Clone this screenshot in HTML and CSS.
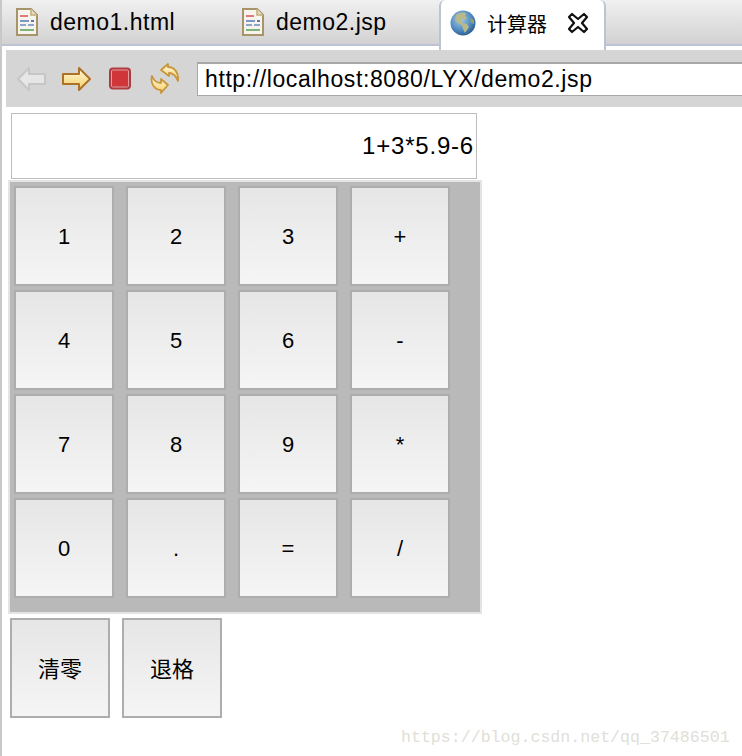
FILE: index.html
```html
<!DOCTYPE html>
<html>
  <head>
    <title>计算器</title>
    <link rel="stylesheet" href="styles.css">
  </head>
  <body>
    <svg class="defs" width="0" height="0">
      <defs>
        <linearGradient id="arrow-fill" x1="0" y1="0" x2="0" y2="1">
          <stop offset="0" stop-color="#fffbe0"/>
          <stop offset="1" stop-color="#f6cc62"/>
        </linearGradient>
        <radialGradient id="globe-fill" cx="0.4" cy="0.35" r="0.75">
          <stop offset="0" stop-color="#a5cdea"/>
          <stop offset="0.6" stop-color="#4f88bd"/>
          <stop offset="1" stop-color="#1f4f82"/>
        </radialGradient>
        <symbol id="doc" viewBox="0 0 22 28">
          <path d="M1 1H15L21 7V27H1Z" fill="#f6f4ec" stroke="#a8946a" stroke-width="2"/>
          <path d="M15 1V7H21" fill="#e9dcb8" stroke="#c2ad7c" stroke-width="1.5"/>
          <rect x="4" y="7" width="8" height="2" fill="#e0787c"/>
          <rect x="4" y="12" width="9" height="2" fill="#7f97c2"/>
          <rect x="15" y="12" width="3" height="2" fill="#5b78ac"/>
          <rect x="4" y="16" width="6" height="2" fill="#8fa5cb"/>
          <rect x="12" y="16" width="6" height="2" fill="#8fa5cb"/>
          <rect x="4" y="21" width="14" height="2" fill="#7cb47c"/>
        </symbol>
      </defs>
    </svg>

    <div class="tabs">
      <div class="tab tab-one">
        <svg class="doc-icon"><use href="#doc"/></svg>
        <span>demo1.html</span>
      </div>
      <div class="tab tab-two">
        <svg class="doc-icon"><use href="#doc"/></svg>
        <span>demo2.jsp</span>
      </div>
      <div class="tab tab-active">
        <svg class="globe-icon" viewBox="0 0 26 26">
          <circle cx="13" cy="13" r="12.5" fill="url(#globe-fill)"/>
          <path d="M6 5C9 2 14 2 16 3L15 6L17 8L14 10L12 9L11 11L13 13L17 14L19 17L17 20L15 23L13 19L12 15L8 13L5 10Z" fill="#b7b98a"/>
          <path d="M20 8L24 10L24 14L21 13Z" fill="#8f9f78"/>
        </svg>
        <span class="tab-title">计算器</span>
        <svg class="close-icon" viewBox="0 0 22 22">
          <path d="M2 5L5 2L11 7L17 2L20 5L15 11L20 17L17 20L11 15L5 20L2 17L7 11Z" fill="#fff" stroke="#111" stroke-width="2.2" stroke-linejoin="round"/>
        </svg>
      </div>
    </div>

    <div class="toolbar">
      <svg class="nav-icon" viewBox="0 0 29 24">
        <path d="M12 1L1 12L12 23V17H28V7H12Z" fill="#e6e6e6" stroke="#c6c6c6" stroke-width="2" stroke-linejoin="round"/>
      </svg>
      <svg class="nav-icon" viewBox="0 0 29 24">
        <path d="M17 1L28 12L17 23V17H1V7H17Z" fill="url(#arrow-fill)" stroke="#ab7228" stroke-width="2" stroke-linejoin="round"/>
      </svg>
      <svg class="stop-icon" viewBox="0 0 22 22">
        <rect x="1" y="1" width="20" height="20" rx="3" fill="#e0a0a2" stroke="#b03a3e" stroke-width="2"/>
        <rect x="3" y="3" width="16" height="16" fill="#cf3539"/>
      </svg>
      <svg class="refresh-icon" viewBox="0 0 29 31">
        <path d="M11 7L18 1V4C24 4 29 9 28 18C26 13 23 10 19 10V13Z" fill="url(#arrow-fill)" stroke="#c8963c" stroke-width="1.8" stroke-linejoin="round"/>
        <path d="M18 22L11 30V27C5 27 0 21 2 13C4 18 7 20 11 20V16Z" fill="url(#arrow-fill)" stroke="#c8963c" stroke-width="1.8" stroke-linejoin="round"/>
      </svg>
      <div class="url">http://localhost:8080/LYX/demo2.jsp</div>
    </div>

    <div class="display">1+3*5.9-6</div>

    <div class="keypad">
      <button class="key">1</button>
      <button class="key">2</button>
      <button class="key">3</button>
      <button class="key">+</button>
      <button class="key">4</button>
      <button class="key">5</button>
      <button class="key">6</button>
      <button class="key">-</button>
      <button class="key">7</button>
      <button class="key">8</button>
      <button class="key">9</button>
      <button class="key">*</button>
      <button class="key">0</button>
      <button class="key">.</button>
      <button class="key">=</button>
      <button class="key">/</button>
    </div>

    <div class="actions">
      <button class="key">清零</button>
      <button class="key">退格</button>
    </div>

    <div class="watermark">https://blog.csdn.net/qq_37486501</div>
  </body>
</html>
```

FILE: styles.css
```css
* {
  box-sizing: border-box;
}
html,
body {
  height: 100%;
}
body {
  margin: 0;
  border-left: 2px solid #c8c8c4;
  background-color: #fff;
  color: #000;
  font-family: "Liberation Sans", "Noto Sans CJK SC", sans-serif;
  overflow: hidden;
  position: relative;
}
.defs {
  position: absolute;
}
.tabs {
  display: flex;
  height: 46px;
  border-bottom: 2px solid #bcc3d2;
  background: linear-gradient(#f0f0f0, #d2d2d2);
  font-size: 23px;
  letter-spacing: 0.5px;
}
.tab {
  display: flex;
  align-items: center;
  height: 44px;
}
.tab-one {
  width: 226px;
  padding-left: 14px;
  gap: 12px;
}
.tab-two {
  width: 211px;
  gap: 12px;
  padding-left: 14px;
}
.tab-active {
  width: 167px;
  height: 50px;
  padding-left: 9px;
  background-color: #fff;
  border: 2px solid #bcc3d2;
  border-top: none;
  border-bottom: none;
  border-radius: 6px 6px 0 0;
  font-size: 20px;
  letter-spacing: 0;
  z-index: 1;
}
.doc-icon {
  flex: none;
  width: 22px;
  height: 28px;
}
.globe-icon {
  flex: none;
  width: 26px;
  height: 26px;
  margin-bottom: 4px;
}
.tab-title {
  margin-left: 11px;
  margin-bottom: 4px;
}
.close-icon {
  flex: none;
  width: 22px;
  height: 22px;
  margin-left: 20px;
  margin-bottom: 4px;
}
.toolbar {
  display: flex;
  align-items: center;
  height: 57px;
  margin-top: 4px;
  margin-left: 4px;
  padding-left: 11px;
  background-color: #d5d5d5;
  overflow: hidden;
}
.nav-icon {
  flex: none;
  width: 29px;
  height: 24px;
  margin-right: 16px;
}
.stop-icon {
  flex: none;
  width: 22px;
  height: 23px;
  margin-left: 2px;
  margin-right: 19px;
}
.refresh-icon {
  flex: none;
  width: 29px;
  height: 31px;
  margin-right: 18px;
}
.url {
  flex: none;
  width: 600px;
  height: 34px;
  border: 1px solid #a8a8a8;
  border-top-width: 2px;
  background-color: #fff;
  padding-left: 7px;
  font-size: 23px;
  letter-spacing: 0.6px;
  line-height: 31px;
  white-space: nowrap;
}
.display {
  width: 466px;
  height: 66px;
  margin-top: 6px;
  margin-left: 9px;
  padding-right: 2px;
  border: 1px solid #bdbdbd;
  font-size: 24px;
  letter-spacing: 0.8px;
  line-height: 64px;
  text-align: right;
}
.keypad {
  display: grid;
  grid-template-columns: repeat(4, 100px);
  grid-auto-rows: 100px;
  column-gap: 12px;
  row-gap: 4px;
  width: 474px;
  height: 434px;
  margin-top: 1px;
  margin-left: 6px;
  padding: 4px;
  border: 2px solid #e4e4e4;
  background-color: #b9b9b9;
}
.key {
  width: 100px;
  height: 100px;
  padding: 0;
  border: 2px solid #adadad;
  border-radius: 0;
  background: linear-gradient(#e6e6e6, #f5f5f5);
  color: #000;
  font-family: inherit;
  font-size: 22px;
}
.keypad .key {
  padding-top: 2px;
}
.actions {
  display: flex;
  gap: 12px;
  margin-top: 4px;
  margin-left: 8px;
}
.actions .key {
  padding-bottom: 2px;
}
.watermark {
  position: absolute;
  left: 399px;
  top: 728px;
  font-family: "Liberation Mono", monospace;
  font-size: 16.6px;
  color: #e0e0d8;
  white-space: nowrap;
}
```
